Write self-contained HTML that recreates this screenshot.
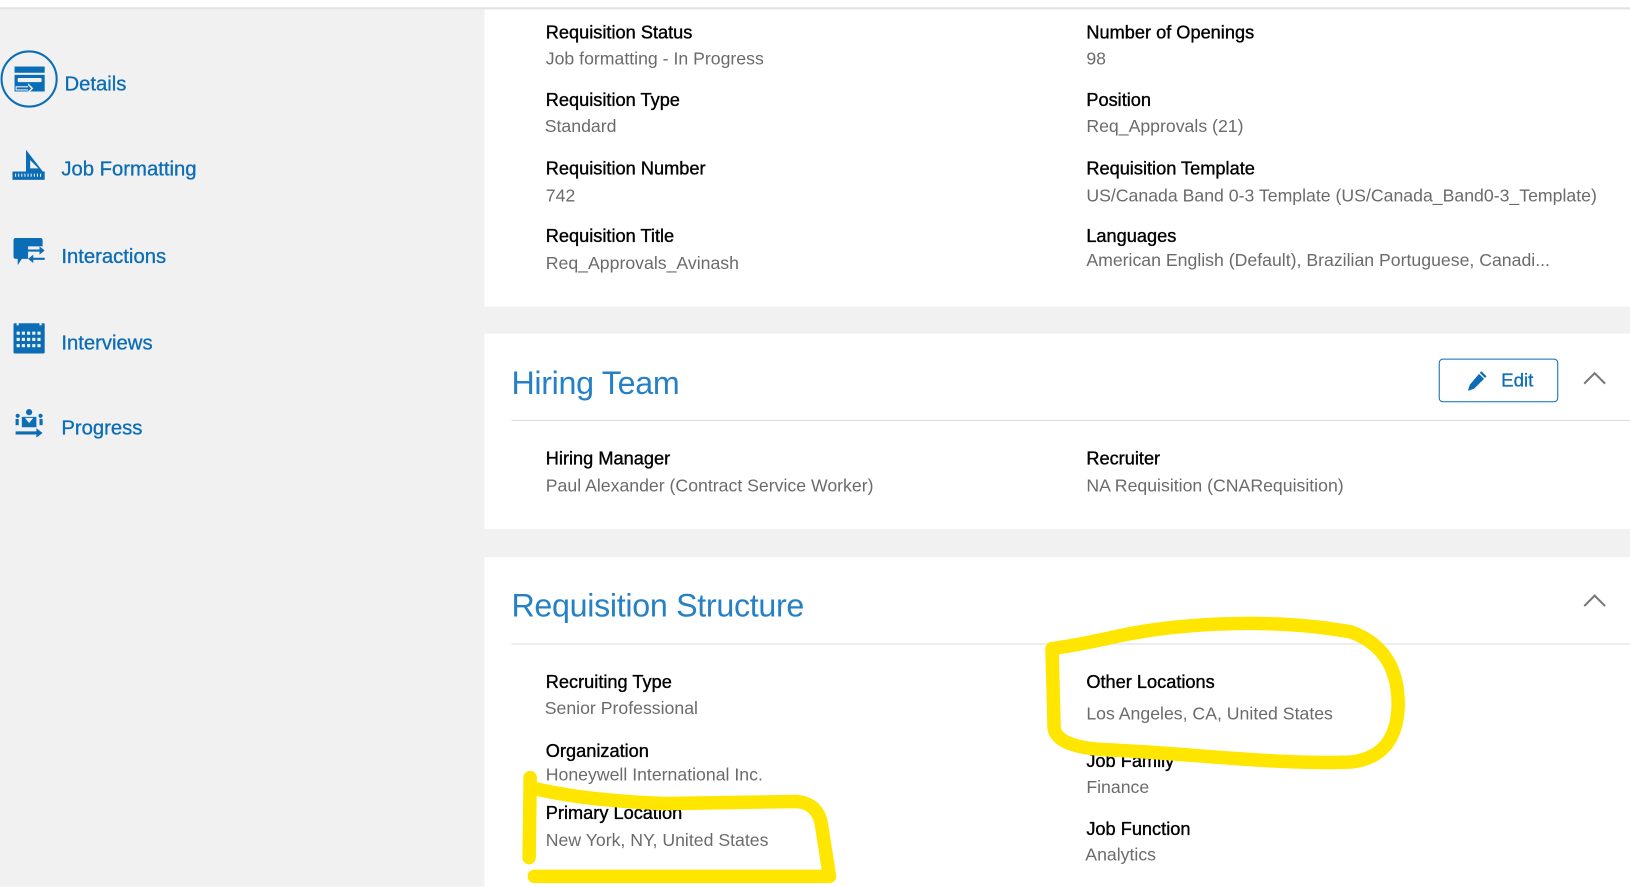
<!DOCTYPE html>
<html><head><meta charset="utf-8"><style>
html,body{margin:0;padding:0;width:1630px;height:886px;overflow:hidden;background:#fff;}
#w{position:absolute;left:0;top:0;width:1568px;height:853px;transform:scale(1.03954);transform-origin:0 0;font-family:"Liberation Sans",sans-serif;}
.a{position:absolute;white-space:nowrap;line-height:20px;margin-top:1px;}
.l{font-size:17.5px;color:#000;-webkit-text-stroke:0.35px #000;}
.v{font-size:17px;color:#6b6b6b;}
.n{font-size:19.5px;color:#0b6db5;line-height:22px;-webkit-text-stroke:0.3px #0b6db5;}
.h{font-size:31px;color:#2580c6;line-height:36px;letter-spacing:-0.3px;}
</style></head><body><div id="w">
<div style="position:absolute;left:0;top:0;width:1568px;height:7px;background:#fff"></div>
<div style="position:absolute;left:0;top:7px;width:1568px;height:2px;background:#e2e2e2"></div>
<div style="position:absolute;left:0;top:9px;width:466px;height:844px;background:#f1f1f1"></div>
<div style="position:absolute;left:466px;top:295px;width:1102px;height:26px;background:#f1f1f1"></div>
<div style="position:absolute;left:466px;top:509px;width:1102px;height:27px;background:#f1f1f1"></div>

<!-- sidebar -->
<svg style="position:absolute;left:0;top:47px" width="58" height="58" viewBox="0 0 58 58"><circle cx="28" cy="29" r="26.5" fill="none" stroke="#0b6db5" stroke-width="2"/><rect x="14" y="17" width="29" height="6" fill="#0b6db5"/><rect x="14" y="25" width="29" height="16" fill="#0b6db5"/><rect x="17" y="28" width="23" height="4" rx="1" fill="#f1f1f1"/><path d="M15 36h12v-3l5 5-5 5v-3H15z" fill="#f1f1f1"/><path d="M16 37h11v-2l3 3-3 3v-2H16z" fill="#0b6db5"/></svg>
<div class="a n" style="left:62px;top:69px">Details</div>
<svg style="position:absolute;left:11px;top:144px" width="34" height="30" viewBox="0 0 34 30"><path d="M14 0L14 22L31 22Z" fill="#0b6db5"/><path d="M18 10L18 18L26 18Z" fill="#f1f1f1"/><rect x="1" y="21" width="31" height="8" fill="#0b6db5"/><path d="M4 23v3M7 23v3M10 23v3M13 23v3M16 23v3M19 23v3M22 23v3M25 23v3M28 23v3" stroke="#f1f1f1" stroke-width="1"/></svg>
<div class="a n" style="left:59px;top:151px">Job Formatting</div>
<svg style="position:absolute;left:13px;top:229px" width="32" height="30" viewBox="0 0 32 30"><path d="M2 0h24a2 2 0 0 1 2 2v6H14v12H8l-4 6v-6H2a2 2 0 0 1-2-2V2a2 2 0 0 1 2-2z" fill="#0b6db5"/><path d="M14 11h11v-3l5 4-5 4v-3H14z" fill="#0b6db5"/><path d="M30 19H19v-3l-5 4 5 4v-3h11z" fill="#0b6db5"/></svg>
<div class="a n" style="left:59px;top:235px">Interactions</div>
<svg style="position:absolute;left:12px;top:309px" width="32" height="32" viewBox="0 0 32 32"><rect x="1" y="2" width="30" height="29" rx="1" fill="#0b6db5"/><g fill="#f1f1f1"><rect x="4" y="1" width="2" height="3"/><rect x="26" y="1" width="2" height="3"/><rect x="4" y="10" width="3" height="3"/><rect x="9" y="10" width="3" height="3"/><rect x="14" y="10" width="3" height="3"/><rect x="19" y="10" width="3" height="3"/><rect x="24" y="10" width="3" height="3"/><rect x="4" y="16" width="3" height="3"/><rect x="9" y="16" width="3" height="3"/><rect x="14" y="16" width="3" height="3"/><rect x="19" y="16" width="3" height="3"/><rect x="24" y="16" width="3" height="3"/><rect x="4" y="22" width="3" height="3"/><rect x="9" y="22" width="3" height="3"/><rect x="14" y="22" width="3" height="3"/><rect x="19" y="22" width="3" height="3"/><rect x="24" y="22" width="3" height="3"/></g></svg>
<div class="a n" style="left:59px;top:318px">Interviews</div>
<svg style="position:absolute;left:13px;top:393px" width="30" height="30" viewBox="0 0 30 30"><circle cx="15" cy="3.5" r="3" fill="#0b6db5"/><circle cx="4" cy="7" r="2" fill="#0b6db5"/><circle cx="26" cy="7" r="2" fill="#0b6db5"/><rect x="2" y="10" width="3" height="6" fill="#0b6db5"/><rect x="25" y="10" width="3" height="6" fill="#0b6db5"/><path d="M8 8h14v10H8z" fill="#0b6db5"/><path d="M11 9l4 5 4-5z" fill="#f1f1f1"/><path d="M2 22h20v-3l6 4.5-6 4.5v-3H2z" fill="#0b6db5"/></svg>
<div class="a n" style="left:59px;top:400px">Progress</div>

<!-- section 1 -->
<div class="a l" style="left:525px;top:20px">Requisition Status</div>
<div class="a v" style="left:525px;top:46px">Job formatting - In Progress</div>
<div class="a l" style="left:525px;top:85px">Requisition Type</div>
<div class="a v" style="left:524px;top:111px">Standard</div>
<div class="a l" style="left:525px;top:151px">Requisition Number</div>
<div class="a v" style="left:525px;top:178px">742</div>
<div class="a l" style="left:525px;top:216px">Requisition Title</div>
<div class="a v" style="left:525px;top:243px">Req_Approvals_Avinash</div>
<div class="a l" style="left:1045px;top:20px">Number of Openings</div>
<div class="a v" style="left:1045px;top:46px">98</div>
<div class="a l" style="left:1045px;top:85px">Position</div>
<div class="a v" style="left:1045px;top:111px">Req_Approvals (21)</div>
<div class="a l" style="left:1045px;top:151px">Requisition Template</div>
<div class="a v" style="left:1045px;top:178px;width:491px;overflow:hidden">US/Canada Band 0-3 Template (US/Canada_Band0-3_Template)</div>
<div class="a l" style="left:1045px;top:216px">Languages</div>
<div class="a v" style="left:1045px;top:240px">American English (Default), Brazilian Portuguese, Canadi...</div>

<!-- hiring team -->
<div class="a h" style="left:492px;top:350px">Hiring Team</div>
<div style="position:absolute;left:1384px;top:345px;width:115px;height:42px;border:1px solid #0b6db5;border-radius:4px;box-sizing:border-box"></div>
<svg style="position:absolute;left:1410px;top:355px" width="22" height="22" viewBox="0 0 22 22"><path d="M15 2l5 5L8 19l-6 2 2-6z" fill="#0b6db5"/><path d="M13 4l5 5" stroke="#fff" stroke-width="1.3"/></svg>
<div class="a" style="left:1444px;top:355px;font-size:18px;color:#0b6db5;-webkit-text-stroke:0.3px #0b6db5">Edit</div>
<svg style="position:absolute;left:1523px;top:357px" width="22" height="14" viewBox="0 0 22 14"><path d="M1 12L11 2l10 10" fill="none" stroke="#777" stroke-width="2"/></svg>
<div style="position:absolute;left:492px;top:404px;width:1076px;height:1px;background:#d9dee3"></div>
<div class="a l" style="left:525px;top:430px">Hiring Manager</div>
<div class="a v" style="left:525px;top:457px">Paul Alexander (Contract Service Worker)</div>
<div class="a l" style="left:1045px;top:430px">Recruiter</div>
<div class="a v" style="left:1045px;top:457px">NA Requisition (CNARequisition)</div>

<!-- requisition structure -->
<div class="a h" style="left:492px;top:564px">Requisition Structure</div>
<svg style="position:absolute;left:1523px;top:571px" width="22" height="14" viewBox="0 0 22 14"><path d="M1 12L11 2l10 10" fill="none" stroke="#777" stroke-width="2"/></svg>
<div style="position:absolute;left:492px;top:619px;width:1076px;height:1px;background:#d9dee3"></div>
<div class="a l" style="left:525px;top:645px">Recruiting Type</div>
<div class="a v" style="left:524px;top:671px">Senior Professional</div>
<div class="a l" style="left:525px;top:711px">Organization</div>
<div class="a v" style="left:525px;top:735px">Honeywell International Inc.</div>
<div class="a l" style="left:525px;top:771px">Primary Location</div>
<div class="a v" style="left:525px;top:798px">New York, NY, United States</div>
<div class="a l" style="left:1045px;top:645px">Other Locations</div>
<div class="a v" style="left:1045px;top:676px">Los Angeles, CA, United States</div>
<div class="a l" style="left:1045px;top:721px">Job Family</div>
<div class="a v" style="left:1045px;top:747px">Finance</div>
<div class="a l" style="left:1045px;top:786px">Job Function</div>
<div class="a v" style="left:1044px;top:812px">Analytics</div>

<!-- highlights -->
<svg style="position:absolute;left:0;top:0" width="1568" height="853" viewBox="0 0 1568 853">
<g fill="none" stroke="#ffe600" stroke-width="13" stroke-linecap="round" stroke-linejoin="round">
<path d="M1012 624L1014 700Q1016 718 1060 721C1150 725 1230 736 1300 733Q1343 728 1345 680Q1346 625 1300 608C1230 595 1140 598 1075 612Q1040 620 1012 624"/>
<path d="M510 748L509 825M512 758Q560 770 640 773L765 771Q786 772 790 792L798 843L514 843"/>
</g></svg>
</div></body></html>
